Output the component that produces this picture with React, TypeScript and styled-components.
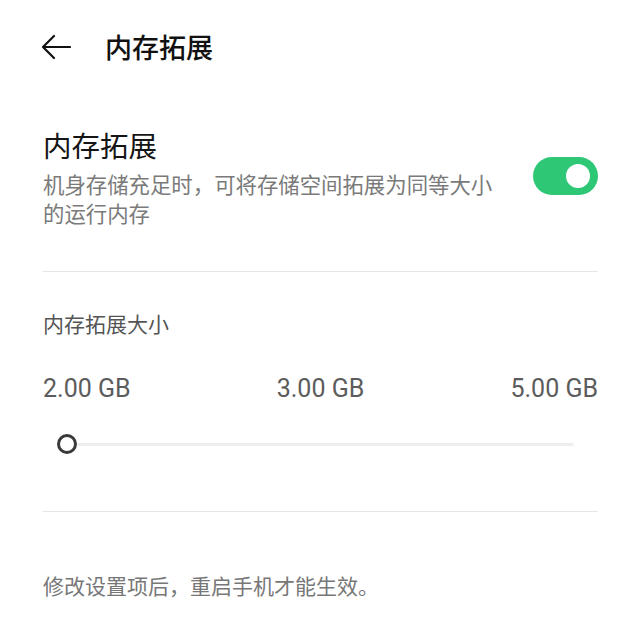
import styled, { createGlobalStyle } from "styled-components";

const GlobalStyle = createGlobalStyle`
  html, body {
    margin: 0;
    padding: 0;
    background: #ffffff;
  }
  body {
    font-family: "Noto Sans CJK SC", "Noto Sans", sans-serif;
  }
`;

const Page = styled.div`
  width: 640px;
  height: 625px;
  background: #ffffff;
  overflow: hidden;
`;

const Header = styled.div`
  display: flex;
  align-items: center;
  height: 94px;
  padding-left: 41px;
  box-sizing: border-box;
`;

const BackButton = styled.div`
  display: flex;
  align-items: center;
  width: 30px;
  height: 30px;
  margin-right: 34px;
`;

const HeaderTitle = styled.div`
  font-size: 27px;
  font-weight: 500;
  color: #111111;
  line-height: 36px;
`;

const Content = styled.div`
  padding: 0 42px 0 43px;
`;

const SwitchRow = styled.div`
  display: flex;
  align-items: center;
  justify-content: space-between;
  padding: 31px 0 44px;
`;

const SwitchText = styled.div`
  display: flex;
  flex-direction: column;
  max-width: 456px;
`;

const SwitchTitle = styled.div`
  font-size: 28.5px;
  line-height: 40px;
  color: #151515;
  margin-bottom: 4px;
`;

const SwitchDesc = styled.div`
  font-size: 21.4px;
  line-height: 29px;
  color: #7a7a7a;
`;

const Toggle = styled.div<{ $on: boolean }>`
  position: relative;
  width: 65px;
  height: 38px;
  border-radius: 19px;
  background: ${(p) => (p.$on ? "#2dc776" : "#d6d6d6")};
  flex-shrink: 0;

  &::after {
    content: "";
    position: absolute;
    top: 7px;
    left: ${(p) => (p.$on ? "33px" : "8px")};
    width: 24px;
    height: 24px;
    border-radius: 50%;
    background: #ffffff;
  }
`;

const Divider = styled.div`
  height: 1px;
  background: #e6e6e6;
`;

const SectionLabel = styled.div`
  margin-top: 36px;
  font-size: 21px;
  line-height: 30px;
  color: #555555;
`;

const ValueRow = styled.div`
  display: flex;
  justify-content: space-between;
  margin-top: 36px;
`;

const Value = styled.div`
  font-family: Roboto, "Noto Sans", sans-serif;
  font-size: 25px;
  line-height: 30px;
  color: #5c5c5c;
`;

const Slider = styled.div`
  display: flex;
  align-items: center;
  height: 24px;
  margin: 28px 24px 55px 14px;
`;

const Thumb = styled.div`
  width: 14px;
  height: 14px;
  border: 3px solid #3a3a3a;
  border-radius: 50%;
  flex-shrink: 0;
`;

const Track = styled.div`
  flex: 1;
  height: 3px;
  background: #eeeeee;
  border-radius: 2px;
`;

const Footer = styled.div`
  margin-top: 58px;
  font-size: 21px;
  line-height: 30px;
  color: #777777;
`;

export default function App() {
  return (
    <Page>
      <GlobalStyle />
      <Header>
        <BackButton>
          <svg width="30" height="30" viewBox="0 0 30 30">
            <path
              d="M2 15 H29 M13 4 L2 15 L13 26"
              fill="none"
              stroke="#111"
              strokeWidth="2.2"
              strokeLinecap="round"
              strokeLinejoin="round"
            />
          </svg>
        </BackButton>
        <HeaderTitle>内存拓展</HeaderTitle>
      </Header>
      <Content>
        <SwitchRow>
          <SwitchText>
            <SwitchTitle>内存拓展</SwitchTitle>
            <SwitchDesc>
              机身存储充足时，可将存储空间拓展为同等大小的运行内存
            </SwitchDesc>
          </SwitchText>
          <Toggle $on={true} />
        </SwitchRow>
        <Divider />
        <SectionLabel>内存拓展大小</SectionLabel>
        <ValueRow>
          <Value>2.00 GB</Value>
          <Value>3.00 GB</Value>
          <Value>5.00 GB</Value>
        </ValueRow>
        <Slider>
          <Thumb />
          <Track />
        </Slider>
        <Divider />
        <Footer>修改设置项后，重启手机才能生效。</Footer>
      </Content>
    </Page>
  );
}
